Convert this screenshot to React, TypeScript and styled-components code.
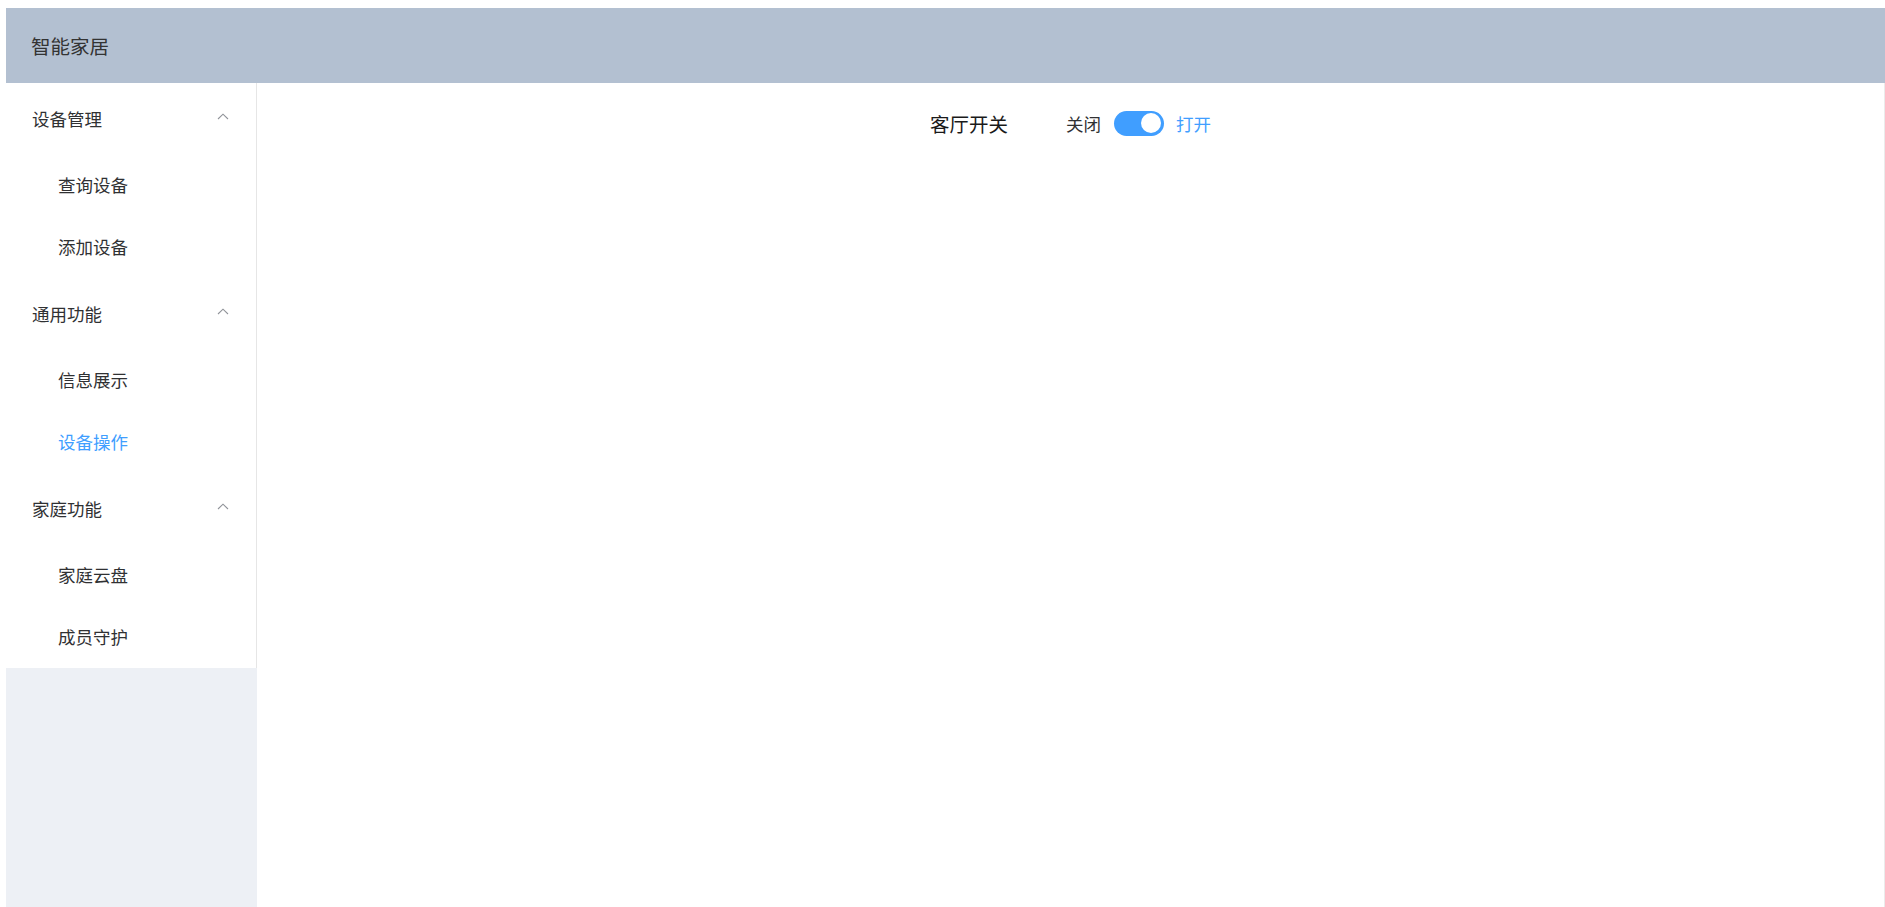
import React, { useState } from "react";
import styled, { createGlobalStyle } from "styled-components";

const GlobalStyle = createGlobalStyle`
  html, body {
    margin: 0;
    padding: 0;
  }
  body {
    margin: 8px 0 0 6px;
    font-family: "Noto Sans CJK SC", "Noto Sans", sans-serif;
    background: #fff;
    overflow: hidden;
  }
`;

type Group = { title: string; items: string[] };

const groups: Group[] = [
  { title: "设备管理", items: ["查询设备", "添加设备"] },
  { title: "通用功能", items: ["信息展示", "设备操作"] },
  { title: "家庭功能", items: ["家庭云盘", "成员守护"] },
];

const ArrowUp = () => (
  <svg width="12" height="7" viewBox="0 0 12 7" fill="none">
    <path d="M1 6L6 1.2L11 6" stroke="#909399" strokeWidth="1.1" />
  </svg>
);

const App = () => {
  const [on, setOn] = useState(true);
  const active = "设备操作";

  return (
    <>
      <GlobalStyle />
      <Layout>
        <Header>智能家居</Header>
        <Body>
          <Aside>
            <Menu>
              {groups.map((g) => (
                <div key={g.title}>
                  <GroupTitle>
                    <span>{g.title}</span>
                    <ArrowBox>
                      <ArrowUp />
                    </ArrowBox>
                  </GroupTitle>
                  {g.items.map((it) => (
                    <MenuItem key={it} $active={it === active}>
                      {it}
                    </MenuItem>
                  ))}
                </div>
              ))}
            </Menu>
          </Aside>
          <Main>
            <SwitchRow>
              <RowLabel>客厅开关</RowLabel>
              <SwitchText $active={!on}>关闭</SwitchText>
              <Track $on={on} onClick={() => setOn(!on)}>
                <Knob $on={on} />
              </Track>
              <SwitchText $active={on}>打开</SwitchText>
            </SwitchRow>
          </Main>
        </Body>
      </Layout>
    </>
  );
};

export default App;

const Layout = styled.div`
  display: flex;
  flex-direction: column;
  width: calc(100vw - 6px);
  height: calc(100vh - 8px);
`;

const Header = styled.div`
  height: 75px;
  line-height: 75px;
  flex-shrink: 0;
  background: #b3c0d1;
  color: #333;
  font-size: 19.5px;
  padding-left: 25px;
`;

const Body = styled.div`
  display: flex;
  flex: 1;
  min-height: 0;
`;

const Aside = styled.div`
  width: 251px;
  flex-shrink: 0;
  background: #edf0f5;
`;

const Menu = styled.div`
  background: #fff;
  border-right: 1px solid #e6e6e6;
`;

const GroupTitle = styled.div`
  position: relative;
  height: 70px;
  display: flex;
  align-items: center;
  padding-left: 26px;
  font-size: 17.5px;
  color: #303133;
`;

const ArrowBox = styled.span`
  position: absolute;
  right: 27px;
  top: 50%;
  margin-top: -5px;
  display: flex;
`;

const MenuItem = styled.div<{ $active?: boolean }>`
  height: 62.5px;
  display: flex;
  align-items: center;
  padding-left: 52px;
  font-size: 17.5px;
  color: ${(p) => (p.$active ? "#409eff" : "#303133")};
`;

const Main = styled.div`
  flex: 1;
  background: #fff;
  border-right: 1px solid #ebebeb;
  padding: 25px;
`;

const SwitchRow = styled.div`
  display: flex;
  justify-content: center;
  align-items: center;
  height: 30px;
`;

const RowLabel = styled.span`
  font-size: 19.5px;
  color: #1a1a1a;
  margin-right: 58px;
`;

const SwitchText = styled.span<{ $active?: boolean }>`
  font-size: 17.5px;
  color: ${(p) => (p.$active ? "#409eff" : "#303133")};
`;

const Track = styled.span<{ $on: boolean }>`
  position: relative;
  display: inline-block;
  width: 50px;
  height: 25px;
  border-radius: 12.5px;
  margin: 0 12.5px;
  background: ${(p) => (p.$on ? "#409eff" : "#dcdfe6")};
  cursor: pointer;
`;

const Knob = styled.span<{ $on: boolean }>`
  position: absolute;
  top: 2.5px;
  left: ${(p) => (p.$on ? "27.5px" : "2.5px")};
  width: 20px;
  height: 20px;
  border-radius: 50%;
  background: #fff;
`;
